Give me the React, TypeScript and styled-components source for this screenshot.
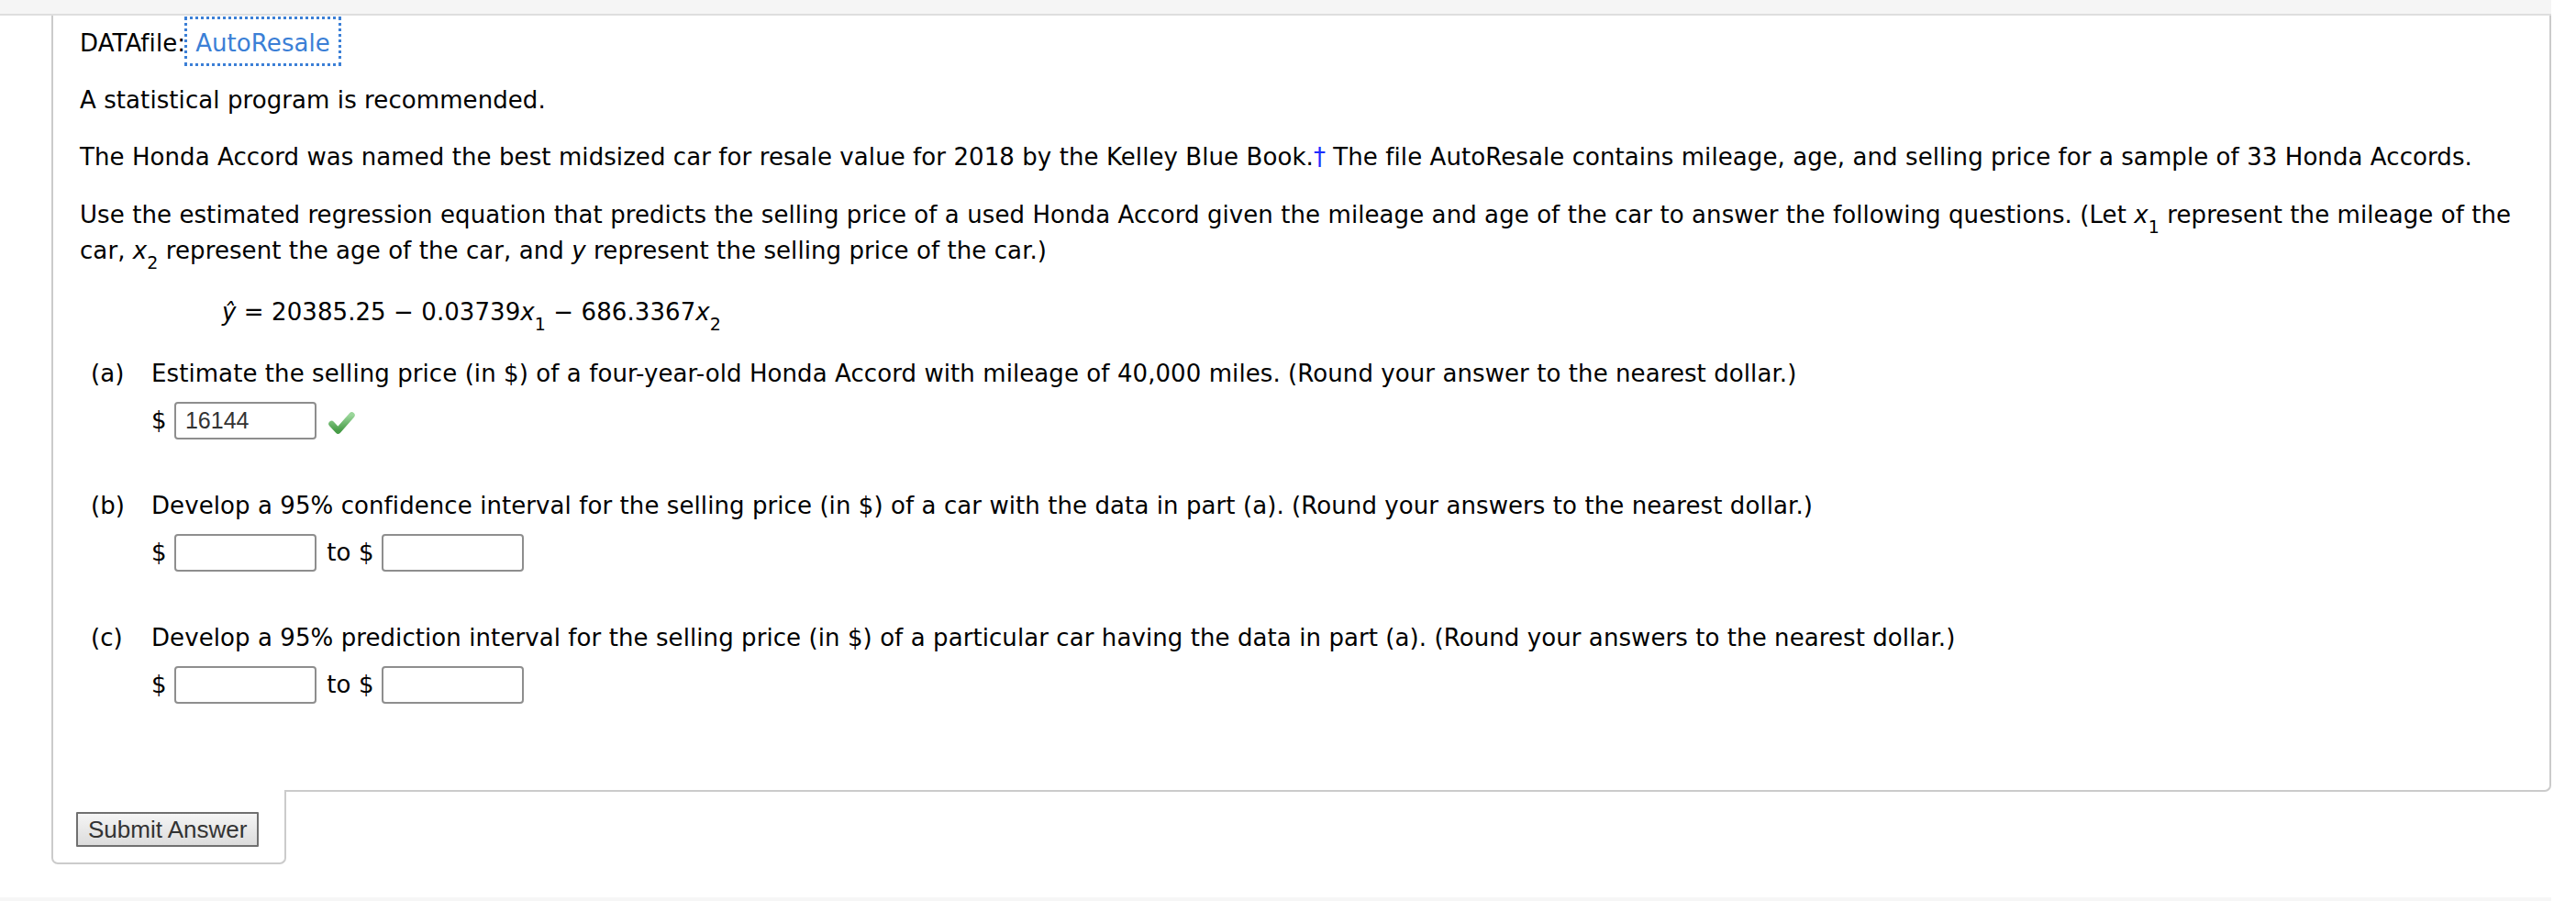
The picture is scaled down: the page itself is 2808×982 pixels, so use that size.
import React from 'react'
import styled, { createGlobalStyle } from 'styled-components'

const GlobalStyle = createGlobalStyle`
  html, body {
    margin: 0;
    padding: 0;
    background: #fff;
  }
  body {
    font-family: "DejaVu Sans", Verdana, sans-serif;
    font-size: 26px;
    letter-spacing: 0.08px;
    color: #000;
  }
`

const Page = styled.div`
  width: 2781px;
`

const TopBar = styled.div`
  height: 15px;
  background: #f5f5f5;
  border-bottom: 2px solid #dedede;
`

const Question = styled.div`
  padding-left: 56px;
`

const Panel = styled.div`
  border: 2px solid #cbcbcb;
  border-top: none;
  border-bottom-right-radius: 7px;
  padding: 1px 20px 94px 29px;
  line-height: 39px;
`

const DataRow = styled.div`
  margin-bottom: 17.5px;
`

const FileLink = styled.a`
  display: inline-block;
  margin-left: -1px;
  padding: 11px 9px 7px;
  line-height: 30px;
  border: 3px dotted #3b7fd6;
  color: #3b7fd6;
  text-decoration: none;
`

const Para = styled.p`
  margin: 0 0 23.5px;
`

const Dagger = styled.span`
  color: #1c2cff;
`

const Sub = styled.sub`
  font-size: 19px;
  line-height: 0;
  vertical-align: -11px;
`

const Equation = styled.div`
  margin: 28px 0 0 155px;
`

const Parts = styled.div`
  margin-top: 28px;
`

const PartRow = styled.div<{ $first?: boolean }>`
  display: flex;
  margin-top: ${p => (p.$first ? '0' : '53px')};
`

const PartLabel = styled.div`
  flex: none;
  width: 66px;
  margin-left: 12px;
`

const PartBody = styled.div`
  flex: 1;
`

const AnswerRow = styled.div`
  margin-top: 11px;
  white-space: nowrap;
`

const Field = styled.input`
  box-sizing: border-box;
  width: 155px;
  height: 41px;
  margin: 0 3px 0 0;
  padding: 0 10px;
  border: 2px solid #8e8e8e;
  border-radius: 4px;
  background: #fff;
  font-family: "Liberation Sans", Arial, sans-serif;
  font-size: 25px;
  color: #333;
  outline: none;
  vertical-align: baseline;
`

const CheckIcon = styled.svg`
  margin-left: 9px;
  vertical-align: -7px;
`

const Tab = styled.div`
  box-sizing: border-box;
  width: 256px;
  margin-top: -2px;
  padding: 24px 0 17px 25px;
  background: #fff;
  border: 2px solid #cbcbcb;
  border-top: none;
  border-radius: 0 0 7px 7px;
`

const SubmitButton = styled.button`
  box-sizing: border-box;
  display: block;
  height: 38px;
  padding: 0 11px;
  border: 2px solid #707070;
  border-radius: 1px;
  background: linear-gradient(#f5f5f5, #dcdcdc);
  font-family: "Liberation Sans", Arial, sans-serif;
  font-size: 26px;
  line-height: 30px;
  color: #333;
`

const BottomStrip = styled.div`
  margin-top: 36px;
  height: 4px;
  background: #f6f6f6;
`

function Check() {
  return (
    <CheckIcon width="31" height="26" viewBox="0 0 31 26">
      <defs>
        <linearGradient id="ok" x1="0" y1="0" x2="0" y2="1">
          <stop offset="0" stopColor="#9ad69a" />
          <stop offset="1" stopColor="#479c47" />
        </linearGradient>
      </defs>
      <path
        d="M4.5 14 L11.5 21.5 L26.5 4.5"
        fill="none"
        stroke="url(#ok)"
        strokeWidth="6.5"
        strokeLinecap="round"
        strokeLinejoin="round"
      />
    </CheckIcon>
  )
}

const x = (n: number) => (
  <>
    <i>x</i>
    <Sub>{n}</Sub>
  </>
)

export default function App() {
  return (
    <Page>
      <GlobalStyle />
      <TopBar />
      <Question>
        <Panel>
          <DataRow>
            DATAfile:<FileLink href="#">AutoResale</FileLink>
          </DataRow>
          <Para>A statistical program is recommended.</Para>
          <Para>
            The Honda Accord was named the best midsized car for resale value for 2018 by the Kelley Blue Book.
            <Dagger>†</Dagger> The file AutoResale contains mileage, age, and selling price for a sample of 33 Honda
            Accords.
          </Para>
          <Para>
            Use the estimated regression equation that predicts the selling price of a used Honda Accord given the
            mileage and age of the car to answer the following questions. (Let {x(1)} represent the mileage of the
            car, {x(2)} represent the age of the car, and <i>y</i> represent the selling price of the car.)
          </Para>
          <Equation>
            <i>ŷ</i> = 20385.25 − 0.03739{x(1)} − 686.3367{x(2)}
          </Equation>
          <Parts>
            <PartRow $first>
              <PartLabel>(a)</PartLabel>
              <PartBody>
                Estimate the selling price (in $) of a four-year-old Honda Accord with mileage of 40,000 miles. (Round
                your answer to the nearest dollar.)
                <AnswerRow>
                  $ <Field defaultValue="16144" readOnly />
                  <Check />
                </AnswerRow>
              </PartBody>
            </PartRow>
            <PartRow>
              <PartLabel>(b)</PartLabel>
              <PartBody>
                Develop a 95% confidence interval for the selling price (in $) of a car with the data in part (a).
                (Round your answers to the nearest dollar.)
                <AnswerRow>
                  $ <Field /> to $ <Field />
                </AnswerRow>
              </PartBody>
            </PartRow>
            <PartRow>
              <PartLabel>(c)</PartLabel>
              <PartBody>
                Develop a 95% prediction interval for the selling price (in $) of a particular car having the data in
                part (a). (Round your answers to the nearest dollar.)
                <AnswerRow>
                  $ <Field /> to $ <Field />
                </AnswerRow>
              </PartBody>
            </PartRow>
          </Parts>
        </Panel>
        <Tab>
          <SubmitButton type="button">Submit Answer</SubmitButton>
        </Tab>
      </Question>
      <BottomStrip />
    </Page>
  )
}
